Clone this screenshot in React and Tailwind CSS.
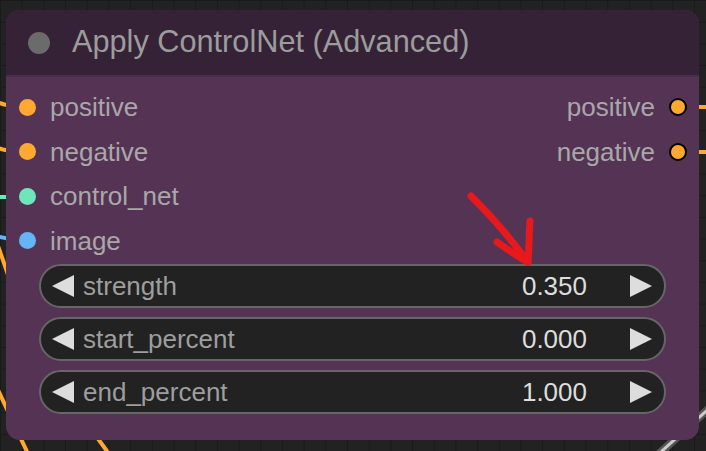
import React from "react";

const font = { fontFamily: '"Liberation Sans", Arial, sans-serif' };

// slot rows of the node: [label, colour, has output]
const slots = [
    { name: "positive", color: "bg-[#ffa931]", out: true },
    { name: "negative", color: "bg-[#ffa931]", out: true },
    { name: "control_net", color: "bg-[#6ee6b9]", out: false },
    { name: "image", color: "bg-[#64b5f6]", out: false },
];

const widgets = [
    { name: "strength", value: "0.350" },
    { name: "start_percent", value: "0.000" },
    { name: "end_percent", value: "1.000" },
];

function Arrow({ dir }) {
    return (
        <svg width="22" height="22" viewBox="0 0 22 22" className="shrink-0">
            {dir === "left" ? (
                <polygon points="0,11 22,0 22,22" fill="#dddddd" />
            ) : (
                <polygon points="22,11 0,0 0,22" fill="#dddddd" />
            )}
        </svg>
    );
}

function Wires() {
    return (
        <svg className="absolute inset-0" width="706" height="451" viewBox="0 0 706 451">
            <g fill="none" strokeLinecap="round">
                <path d="M-20 96 C -6 100, 4 107, 24 107" stroke="#ffa931" strokeWidth="4" />
                <path d="M-20 142 C -6 146, 4 152, 24 152" stroke="#ffa931" strokeWidth="4" />
                <path d="M-10 197 L 24 197" stroke="#6ee6b9" strokeWidth="4" />
                <path d="M-20 232 C -6 235, 4 240, 24 240" stroke="#64b5f6" strokeWidth="4" />
                <path d="M-4 240 L 14 292" stroke="#ffa931" strokeWidth="4" />
                <path d="M-2 390 L 30 458" stroke="#ffa931" strokeWidth="4" />
                <path d="M80 414 L 112 458" stroke="#ffa931" strokeWidth="4" />
                <path d="M690 107 L 712 107" stroke="#ffa931" strokeWidth="4" />
                <path d="M690 152 L 712 152" stroke="#ffa931" strokeWidth="4" />
                <path d="M652 460 L 714 404" stroke="#555555" strokeWidth="8" />
                <path d="M652 460 L 714 404" stroke="#cccccc" strokeWidth="3" />
            </g>
        </svg>
    );
}

function RedArrow() {
    return (
        <svg className="absolute inset-0 pointer-events-none" width="706" height="451" viewBox="0 0 706 451">
            <g fill="none" stroke="#e8191a" strokeWidth="7" strokeLinecap="round" strokeLinejoin="round">
                <path d="M471 196 C 490 215, 512 240, 527 261" />
                <path d="M497 242 C 508 250, 518 257, 528 262" />
                <path d="M530 221 C 529 235, 529 250, 528 262" />
            </g>
        </svg>
    );
}

export default function App() {
    return (
        <div
            className="relative w-[706px] h-[451px] overflow-hidden bg-[#222222] bg-[linear-gradient(to_right,#1a1a1a_1px,transparent_1px),linear-gradient(to_bottom,#1a1a1a_1px,transparent_1px)] bg-[size:21.7px_21.7px] pt-[10px] pl-[6px]"
            style={font}
        >
            <Wires />

            {/* node */}
            <div className="relative w-[693px] h-[430px] rounded-[14px] overflow-hidden bg-[#553355] flex flex-col">
                {/* title */}
                <div className="h-[65px] bg-[#352236] flex items-center pl-[22px] gap-[22px] shrink-0">
                    <div className="w-[22px] h-[22px] rounded-full bg-[#6b6b6b]" />
                    <span className="text-[30.7px] leading-none text-[#9c9c9c]">Apply ControlNet (Advanced)</span>
                </div>
                <div className="h-[2px] bg-[#4a2c4b] shrink-0" />

                {/* slots */}
                <div className="flex flex-col pt-[8px]">
                    {slots.map((s) => (
                        <div key={s.name} className="h-[44.5px] flex items-center justify-between pl-[13px] pr-[12px]">
                            <div className="flex items-center gap-[14px]">
                                <div className={`w-[17px] h-[17px] rounded-full ${s.color}`} />
                                <span className="text-[26px] leading-none text-[#a8a8a8]">{s.name}</span>
                            </div>
                            {s.out && (
                                <div className="flex items-center gap-[14px]">
                                    <span className="text-[26px] leading-none text-[#a8a8a8]">{s.name}</span>
                                    <div className="w-[18px] h-[18px] rounded-full bg-[#ffa931] border-2 border-black" />
                                </div>
                            )}
                        </div>
                    ))}
                </div>

                {/* widgets */}
                <div className="flex flex-col gap-[9px] px-[33px] mt-[1px]">
                    {widgets.map((w) => (
                        <div
                            key={w.name}
                            className="h-[44px] rounded-full border-2 border-[#666666] bg-[#222222] flex items-center pl-[11px] pr-[12px]"
                        >
                            <Arrow dir="left" />
                            <span className="ml-[9px] text-[26px] leading-none text-[#9e9e9e]">{w.name}</span>
                            <span className="ml-auto text-[26px] leading-none text-[#dddddd]">{w.value}</span>
                            <div className="ml-[43px]">
                                <Arrow dir="right" />
                            </div>
                        </div>
                    ))}
                </div>
            </div>

            <RedArrow />
        </div>
    );
}
